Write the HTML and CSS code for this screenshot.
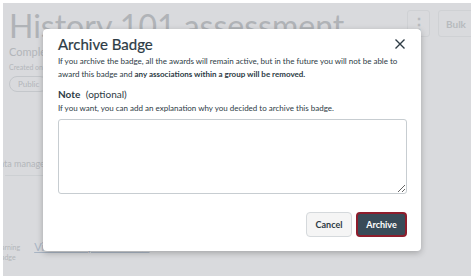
FILE: index.html
```html
<!DOCTYPE html>
<html lang="en">
<head>
<meta charset="UTF-8">
<meta name="viewport" content="width=device-width, initial-scale=1.0">
<title>Archive Badge</title>
<link rel="stylesheet" href="styles.css">
</head>
<body>
<div class="frame">
  <div class="page">
    <!-- badge page behind the dialog -->
    <div class="top-row">
      <h1 class="page-title">History 101 assessment</h1>
      <div class="actions">
        <span class="kebab">&#8942;</span>
        <span class="bulk">Bulk</span>
      </div>
    </div>
    <div class="subtitle">Complete the assessment</div>
    <div class="created">Created on</div>
    <span class="pill">Public</span>
    <div class="data-row">Metadata manager</div>
    <div class="divider"></div>
    <div class="bottom-row">
      <div class="side-label">Earning<br>badge</div>
      <span class="link">View all requirements &#8599;</span>
    </div>

    <div class="modal">
      <div class="modal-head">
        <h2 class="modal-title">Archive Badge</h2>
        <svg class="close" width="12" height="12" viewBox="0 0 12 12">
          <path d="M1.5 1.5 L10.5 10.5 M10.5 1.5 L1.5 10.5" stroke="#2d3b45" stroke-width="1.4" fill="none"/>
        </svg>
      </div>
      <p class="intro">If you archive the badge, all the awards will remain active, but in the future you will not be able to award this badge and <b>any associations within a group will be removed.</b></p>
      <div class="note-label"><b>Note</b> <span>(optional)</span></div>
      <div class="note-help">If you want, you can add an explanation why you decided to archive this badge.</div>
      <textarea class="note-box"></textarea>
      <div class="buttons">
        <button class="btn cancel">Cancel</button>
        <button class="btn archive">Archive</button>
      </div>
    </div>
  </div>
</div>
</body>
</html>
```
FILE: styles.css
```css
body {
  margin: 0;
  font-family: Lato, "Liberation Sans", sans-serif;
  color: #2d3b45;
  background: #fff;
}
.frame {
  padding: 3px 3px 4px 3px;
  height: 273px;
}
.page {
  position: relative;
  height: 273px;
  background-color: #d9dadd;
  overflow: hidden;
  color: #b3b6ba;
}
.top-row {
  display: flex;
  justify-content: space-between;
  padding: 4px 0 0 6px;
}
.page-title {
  margin: 0;
  font-size: 32px;
  font-weight: 400;
  line-height: 38px;
  color: #b0b3b7;
}
.actions {
  display: flex;
  gap: 8px;
  padding-top: 3px;
}
.kebab, .bulk {
  display: flex;
  align-items: center;
  justify-content: center;
  height: 25px;
  border: 1px solid #cfd1d4;
  border-radius: 3px;
  font-size: 10px;
  font-weight: 700;
  color: #b7babe;
}
.kebab {
  width: 21px;
  font-size: 16px;
}
.bulk {
  width: 40px;
  justify-content: flex-start;
  padding-left: 7px;
  margin-right: -16px;
}
.subtitle {
  padding: 0 0 0 6px;
  font-size: 11px;
}
.created {
  padding: 5px 0 0 6px;
  font-size: 7px;
}
.pill {
  display: inline-block;
  margin: 3px 0 0 6px;
  padding: 1px 8px;
  border: 1px solid #c4c7cb;
  border-radius: 9px;
  font-size: 8px;
  line-height: 12px;
}
.data-row {
  margin: 66px 0 0 -29px;
  font-size: 9px;
}
.divider {
  margin: 6px 0 0 2px;
  width: 300px;
  border-top: 1px solid #cdd0d3;
}
.bottom-row {
  display: flex;
  gap: 14px;
  margin-top: 64px;
  margin-left: -6px;
}
.side-label {
  font-size: 7px;
  line-height: 10px;
  padding-top: 2px;
}
.link {
  font-size: 11px;
  color: #a9b5c4;
  text-decoration: underline;
}
.modal {
  position: absolute;
  left: 40px;
  top: 26px;
  width: 378px;
  height: 222px;
  box-sizing: border-box;
  padding: 5px 14px 0 15px;
  background: #fff;
  border-radius: 4px;
  box-shadow: 0 2px 6px rgba(0, 0, 0, 0.25);
  display: flex;
  flex-direction: column;
  color: #2d3b45;
}
.modal-head {
  display: flex;
  justify-content: space-between;
  align-items: center;
}
.modal-title {
  margin: 0;
  font-size: 15px;
  font-weight: 400;
  line-height: 20px;
  -webkit-text-stroke: 0.2px #2d3b45;
}
.close {
  margin-right: 1px;
}
.intro {
  margin: 1px 0 0 0;
  font-size: 8px;
  line-height: 13px;
}
.note-label {
  margin-top: 7px;
  font-size: 10px;
  line-height: 13px;
}
.note-label span {
  margin-left: 3px;
  font-weight: 400;
}
.note-help {
  margin-top: 1px;
  font-size: 8px;
  line-height: 12px;
}
.note-box {
  margin-top: 5px;
  height: 75px;
  box-sizing: border-box;
  border: 1px solid #c7cdd1;
  border-radius: 3px;
  resize: vertical;
  font-family: inherit;
}
.buttons {
  display: flex;
  justify-content: flex-end;
  gap: 4px;
  margin-top: 18px;
}
.btn {
  font-family: inherit;
  font-size: 9px;
  font-weight: 700;
  height: 25px;
  border-radius: 4px;
  cursor: pointer;
}
.cancel {
  width: 46px;
  background: #f5f5f5;
  border: 1px solid #d5d9dc;
  color: #2d3b45;
}
.archive {
  width: 51px;
  background: #394b58;
  border: 2px solid #8e1d2c;
  color: #fff;
}
```
